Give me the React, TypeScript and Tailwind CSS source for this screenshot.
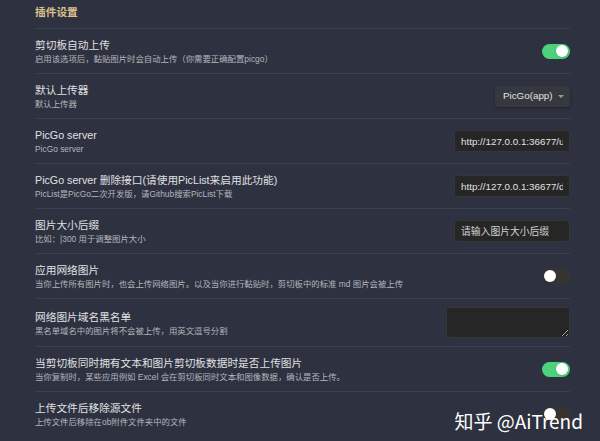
import React, { useState } from "react";

const FONT = '"Liberation Sans", "Noto Sans CJK SC", sans-serif';

function Toggle({ on, onChange }: { on: boolean; onChange: () => void }) {
  return (
    <button
      onClick={onChange}
      className={
        "relative flex h-[15px] w-[28px] shrink-0 items-center rounded-full px-[2px] " +
        (on ? "justify-end bg-[#4dd17d]" : "justify-start bg-[#383430]")
      }
    >
      <span className="h-[12px] w-[12px] rounded-full bg-white shadow" />
    </button>
  );
}

interface RowProps {
  title: string;
  desc: string;
  children?: React.ReactNode;
  last?: boolean;
}

function Row({ title, desc, children, last }: RowProps) {
  return (
    <div
      className={
        "flex items-center justify-between py-[8px] " +
        (last ? "" : "border-b border-[#3b404d]")
      }
    >
      <div className="flex min-w-0 flex-col">
        <div className="h-[16px] text-[10.7px] leading-[16px] text-[#e0e1e4]">
          {title}
        </div>
        <div className="h-[12px] whitespace-nowrap text-[8.4px] leading-[12px] text-[#b3b6bc]">
          {desc}
        </div>
      </div>
      <div className="ml-4 flex shrink-0 items-center">{children}</div>
    </div>
  );
}

function TextInput({
  value,
  placeholder,
  onChange,
}: {
  value: string;
  placeholder?: string;
  onChange: (v: string) => void;
}) {
  return (
    <input
      value={value}
      placeholder={placeholder}
      onChange={(e) => onChange(e.target.value)}
      className="h-[22px] w-[116px] rounded-[3px] border border-[#363636] bg-[#262626] px-[6px] text-[9.8px] text-[#e2e2e2] outline-none placeholder:text-[#d2d2d2]"
    />
  );
}

export default function App() {
  const [autoUpload, setAutoUpload] = useState(true);
  const [netImages, setNetImages] = useState(false);
  const [clipboardBoth, setClipboardBoth] = useState(true);
  const [removeSource, setRemoveSource] = useState(false);
  const [uploadServer, setUploadServer] = useState("http://127.0.0.1:36677/upload");
  const [deleteServer, setDeleteServer] = useState("http://127.0.0.1:36677/delete");
  const [sizeSuffix, setSizeSuffix] = useState("");
  const [blacklist, setBlacklist] = useState("");

  return (
    <div
      className="relative h-[441px] w-[600px] overflow-hidden bg-[#2e3240]"
      style={{ fontFamily: FONT }}
    >
      <div className="pl-[35px] pr-[30px]">
        <div className="flex h-[29px] items-center border-b border-[#3b404d] pb-[3px]">
          <h3 className="text-[10.7px] font-bold text-[#dcc08a]">插件设置</h3>
        </div>

        <Row
          title="剪切板自动上传"
          desc="启用该选项后，黏贴图片时会自动上传（你需要正确配置picgo）"
        >
          <Toggle on={autoUpload} onChange={() => setAutoUpload(!autoUpload)} />
        </Row>

        <Row title="默认上传器" desc="默认上传器">
          <div className="flex h-[21px] w-[75px] items-center justify-between rounded-[3px] bg-[#363840] pl-[8px] pr-[6px] text-[9.8px] text-[#e2e2e2] shadow-[0_1px_3px_rgba(0,0,0,0.35)]">
            <span>PicGo(app)</span>
            <span className="h-0 w-0 border-x-[3px] border-t-[3px] border-x-transparent border-t-[#9a9a9a]" />
          </div>
        </Row>

        <Row title="PicGo server" desc="PicGo server">
          <TextInput value={uploadServer} onChange={setUploadServer} />
        </Row>

        <Row
          title="PicGo server 删除接口(请使用PicList来启用此功能)"
          desc="PicList是PicGo二次开发版，请Github搜索PicList下载"
        >
          <TextInput value={deleteServer} onChange={setDeleteServer} />
        </Row>

        <Row title="图片大小后缀" desc="比如：|300 用于调整图片大小">
          <TextInput
            value={sizeSuffix}
            placeholder="请输入图片大小后缀"
            onChange={setSizeSuffix}
          />
        </Row>

        <Row
          title="应用网络图片"
          desc="当你上传所有图片时，也会上传网络图片。以及当你进行黏贴时，剪切板中的标准 md 图片会被上传"
        >
          <Toggle on={netImages} onChange={() => setNetImages(!netImages)} />
        </Row>

        <Row title="网络图片域名黑名单" desc="黑名单域名中的图片将不会被上传，用英文逗号分割">
          <textarea
            value={blacklist}
            onChange={(e) => setBlacklist(e.target.value)}
            className="h-[31px] w-[124px] rounded-[3px] border border-[#363636] bg-[#262626] px-[6px] text-[9.8px] text-[#e2e2e2] outline-none"
          />
        </Row>

        <Row
          title="当剪切板同时拥有文本和图片剪切板数据时是否上传图片"
          desc="当你复制时，某些应用例如 Excel 会在剪切板同时文本和图像数据，确认是否上传。"
        >
          <Toggle
            on={clipboardBoth}
            onChange={() => setClipboardBoth(!clipboardBoth)}
          />
        </Row>

        <Row
          title="上传文件后移除源文件"
          desc="上传文件后移除在ob附件文件夹中的文件"
          last
        >
          <Toggle
            on={removeSource}
            onChange={() => setRemoveSource(!removeSource)}
          />
        </Row>
      </div>

      <div
        className="pointer-events-none absolute bottom-[11px] right-[17px] text-[19px] leading-none text-white"
        style={{ fontFamily: '"Noto Sans CJK SC", sans-serif' }}
      >
        知乎 @AiTrend
      </div>
    </div>
  );
}
